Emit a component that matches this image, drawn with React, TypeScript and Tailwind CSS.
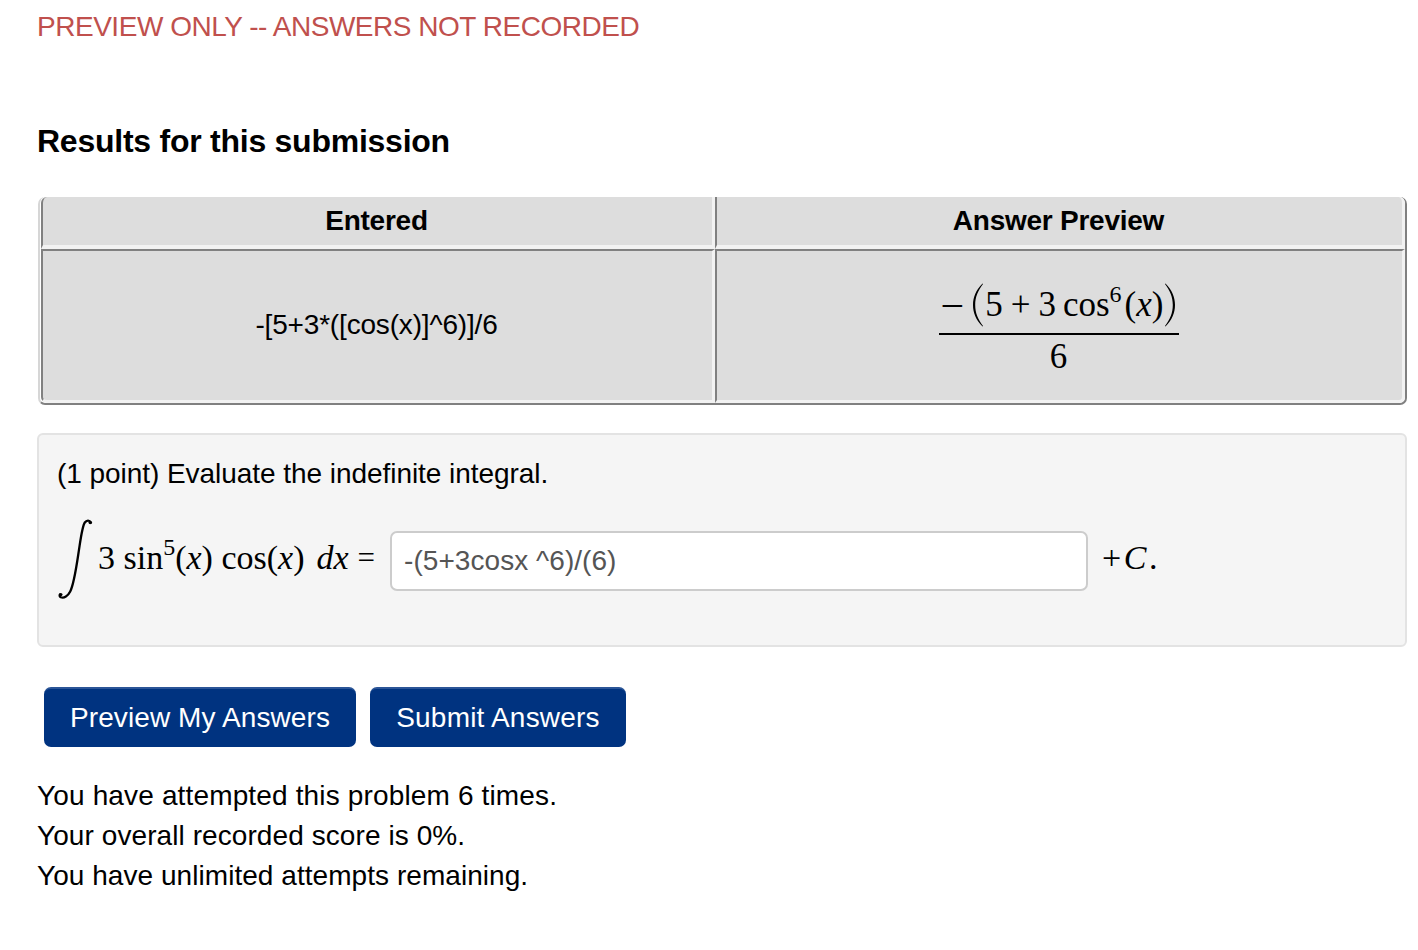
import React from "react";

const sans = "font-['Liberation_Sans',Arial,sans-serif]";
const serif = "font-['Liberation_Serif','Times_New_Roman',serif]";

function Integral() {
  return (
    <svg width="36" height="82" viewBox="0 0 36 82" className="shrink-0">
      <path
        d="M34 4.500C32.500 1.800 29.500 2 27.800 4.500 25 8.800 24 19 21.200 37 18.500 55 16.800 66.500 13.200 73.500 11 78 7 80.500 3.800 79.200 2.600 78.600 2.200 77.200 3 76.400"
        fill="none"
        stroke="#000"
        strokeWidth="2.300"
        strokeLinecap="round"
      />
      <circle cx="33.200" cy="4.600" r="1.700" fill="#000" />
      <circle cx="3.800" cy="76.600" r="1.700" fill="#000" />
    </svg>
  );
}

function BigParen({ flip }: { flip?: boolean }) {
  return (
    <svg width="12" height="44" viewBox="0 0 12 44" className={flip ? "shrink-0 -scale-x-100" : "shrink-0"}>
      <path d="M10.500 0.500C4 7 1 14 1 22S4 37 10.500 43.500L11 43C6 36.500 3.200 30 3.200 22S6 7.500 11 1z" fill="#000" />
    </svg>
  );
}

export default function App() {
  return (
    <div className={`${sans} h-[950px] bg-white pl-[37px] pr-[11px] text-black`}>
      <div className="pt-[10px] text-[28px] leading-[34px] tracking-[-0.47px] text-[#c0504d]">
        PREVIEW ONLY -- ANSWERS NOT RECORDED
      </div>

      <h1 className="mt-[77px] text-[32px] font-bold leading-[40px] tracking-[-0.25px]">
        Results for this submission
      </h1>

      <div className="mt-[36px] ml-px rounded-[7px] border-2 border-t-0 border-l-[#d6d6d6] border-r-[#808080] border-b-[#808080] pl-px">
        <div className="grid grid-cols-[674px_690px]">
          <div className="flex h-[52px] items-center justify-center rounded-tl-[6px] border-r-[3px] border-b-4 border-l-2 border-r-[#f2f2f2] border-b-[#f2f2f2] border-l-[#808080] bg-[#dddddd] pr-[2px] text-[28px] font-bold tracking-[-0.25px]">
            Entered
          </div>
          <div className="flex h-[52px] items-center justify-center rounded-tr-[6px] border-r-[3px] border-b-4 border-l-2 border-r-[#f2f2f2] border-b-[#f2f2f2] border-l-[#808080] bg-[#dddddd] pr-[2px] text-[28px] font-bold tracking-[-0.25px]">
            Answer Preview
          </div>
          <div className="flex h-[154px] items-center justify-center rounded-bl-[6px] border-t-2 border-r-[3px] border-b-[3px] border-l-2 border-t-[#808080] border-r-[#f2f2f2] border-b-[#f2f2f2] border-l-[#808080] bg-[#dddddd] pr-[2px] pb-[2px] text-[28px] tracking-[-0.17px]">
            -[5+3*([cos(x)]^6)]/6
          </div>
          <div className={`${serif} flex h-[154px] flex-col items-center justify-center rounded-br-[6px] border-t-2 border-r-[3px] border-b-[3px] border-l-2 border-t-[#808080] border-r-[#f2f2f2] border-b-[#f2f2f2] border-l-[#808080] bg-[#dddddd] pt-[5px] pr-[2px] text-[35px]`}>
            <div className="flex h-[56px] w-[240px] items-center justify-center border-b-2 border-black pb-[2px] whitespace-nowrap">
              <span className="relative top-[1px] text-[42px] leading-none">−</span>
              <span className="ml-[8px]"><BigParen /></span>
              <span className="ml-px">5</span>
              <span className="mx-[8px]">+</span>
              <span>3</span>
              <span className="ml-[7px]">cos</span>
              <span className="relative top-[-11px] text-[24px] leading-none">6</span>
              <span className="ml-[3px]">(</span>
              <i>x</i>
              <span>)</span>
              <span className="ml-px"><BigParen flip /></span>
            </div>
            <div className="flex h-[42px] items-center leading-none">6</div>
          </div>
        </div>
      </div>

      <div className="mt-[28px] h-[214px] rounded-[6px] border-2 border-[#e3e3e3] bg-[#f5f5f5] pl-[18px]">
        <p className="pt-[21px] text-[28px] leading-[36px] tracking-[-0.05px]">
          (1 point) Evaluate the indefinite integral.
        </p>
        <div className={`${serif} mt-[25px] flex h-[84px] items-center text-[34px]`}>
          <Integral />
          <span className="mb-[4px] ml-[5px] whitespace-nowrap">
            3 sin<sup className="top-[-14px] text-[24px] leading-none">5</sup>(<i>x</i>) cos(<i>x</i>)
          </span>
          <span className="mb-[4px] ml-[12px] whitespace-nowrap"><i>dx</i></span>
          <span className="mb-[2px] ml-[9px] text-[31px]">=</span>
          <input
            readOnly
            value="-(5+3cosx ^6)/(6)"
            className={`${sans} mt-[4px] ml-[15px] h-[60px] w-[698px] rounded-[7px] border-2 border-[#cccccc] bg-white px-[12px] text-[28px] tracking-[0.05px] text-[#555555] outline-none`}
          />
          <span className="mb-[4px] ml-[14px] whitespace-nowrap tracking-[2.5px]">+<i>C</i>.</span>
        </div>
      </div>

      <div className="mt-[40px] flex gap-[14px] pl-[7px]">
        <button className="h-[60px] w-[312px] rounded-[7px] border-t-2 border-t-[#2b5597] bg-[#003380] text-[28px] tracking-[0.1px] text-white">
          Preview My Answers
        </button>
        <button className="h-[60px] w-[256px] rounded-[7px] border-t-2 border-t-[#2b5597] bg-[#003380] text-[28px] tracking-[0.2px] text-white">
          Submit Answers
        </button>
      </div>

      <div className="mt-[29px] text-[28px] leading-[40px]">
        <p className="tracking-[0.15px]">You have attempted this problem 6 times.</p>
        <p className="tracking-[0.08px]">Your overall recorded score is 0%.</p>
        <p className="tracking-[0.05px]">You have unlimited attempts remaining.</p>
      </div>
    </div>
  );
}
